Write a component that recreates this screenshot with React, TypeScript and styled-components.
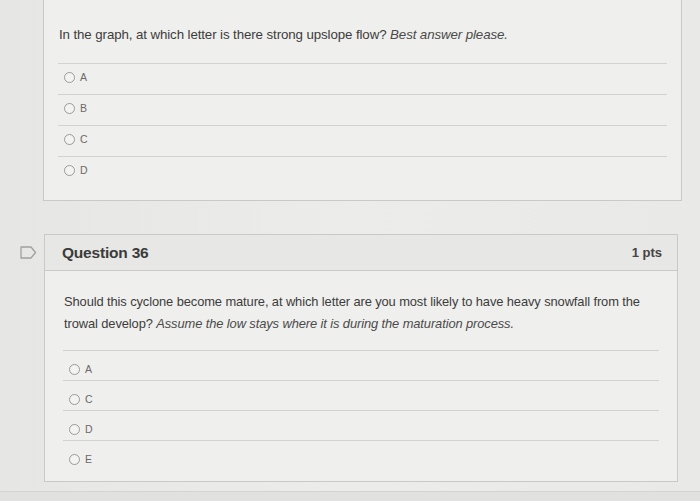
import React from "react";
import styled, { createGlobalStyle } from "styled-components";

const GlobalStyle = createGlobalStyle`
  html, body {
    margin: 0;
    padding: 0;
    background: #e8e8e6;
  }
  body {
    font-family: "Liberation Sans", Arial, sans-serif;
    color: #3a3a3a;
  }
`;

const Page = styled.div`
  width: 700px;
  height: 501px;
  overflow: hidden;
  display: flex;
  flex-direction: column;
  background: linear-gradient(90deg, #e6e6e4 0%, #ececea 50%, #e9e9e7 100%);
`;

const QuestionRow = styled.div<{ $top: number }>`
  display: flex;
  align-items: flex-start;
  margin-top: ${(p) => p.$top}px;
`;

const Gutter = styled.div<{ $width: number }>`
  width: ${(p) => p.$width}px;
  flex-shrink: 0;
  display: flex;
  padding-top: 12px;
  padding-left: 20px;
  box-sizing: border-box;
`;

const Card = styled.div<{ $width: number; $open?: boolean }>`
  width: ${(p) => p.$width}px;
  box-sizing: border-box;
  border: 1px solid #c9c9c7;
  border-top: ${(p) => (p.$open ? "none" : "1px solid #c9c9c7")};
  background: #efefed;
`;

const Header = styled.div`
  height: 35px;
  display: flex;
  align-items: center;
  justify-content: space-between;
  padding: 0 15px 0 17px;
  background: #e7e7e5;
  border-bottom: 1px solid #c9c9c7;
`;

const Title = styled.div`
  font-size: 15.5px;
  font-weight: bold;
  color: #3b3b3b;
  letter-spacing: -0.2px;
`;

const Points = styled.div`
  font-size: 13px;
  font-weight: bold;
  color: #444;
`;

const Body = styled.div<{ $pt: number; $pb: number; $px: number }>`
  padding: ${(p) => p.$pt}px ${(p) => p.$px}px ${(p) => p.$pb}px;
`;

const Prompt = styled.p<{ $size: number; $lh: number; $mb: number }>`
  margin: 0 0 ${(p) => p.$mb}px;
  padding: 0 0 0 1px;
  font-size: ${(p) => p.$size}px;
  line-height: ${(p) => p.$lh}px;
  color: #3c3c3c;
  letter-spacing: -0.1px;

  em {
    font-style: italic;
    color: #4a4a4a;
  }
`;

const Answers = styled.div`
  border-top: 1px solid #d2d2d0;
`;

const Answer = styled.label<{ $h: number; $pt: number; $last?: boolean }>`
  height: ${(p) => p.$h}px;
  box-sizing: border-box;
  display: flex;
  align-items: flex-start;
  gap: 5px;
  padding: ${(p) => p.$pt}px 0 0 6px;
  border-bottom: ${(p) => (p.$last ? "none" : "1px solid #d2d2d0")};
  font-size: 10.5px;
  line-height: 12px;
  color: #6a6a6a;
`;

const Radio = styled.span`
  width: 9px;
  height: 9px;
  margin-top: 1px;
  border-radius: 50%;
  border: 1px solid #9a9a9a;
  background: #f3f3f1;
  flex-shrink: 0;
`;

const Footer = styled.div`
  margin-top: auto;
  height: 9px;
  background: #e1e1e0;
  border-top: 1px solid #d4d4d2;
`;

const FlagIcon = () => (
  <svg width="17" height="13" viewBox="0 0 17 13" fill="none">
    <path
      d="M1 1 H11 L15.5 6.5 L11 12 H1 Z"
      stroke="#a0a0a0"
      strokeWidth="1.3"
      strokeLinejoin="round"
    />
  </svg>
);

const App = () => {
  return (
    <Page>
      <GlobalStyle />
      <QuestionRow $top={0}>
        <Gutter $width={43} />
        <Card $width={639} $open>
          <Body $pt={26} $pb={12} $px={14}>
            <Prompt $size={13.3} $lh={17} $mb={20}>
              In the graph, at which letter is there strong upslope flow?{" "}
              <em>Best answer please.</em>
            </Prompt>
            <Answers>
              {["A", "B", "C", "D"].map((l, i, arr) => (
                <Answer key={l} $h={31} $pt={7} $last={i === arr.length - 1}>
                  <Radio />
                  {l}
                </Answer>
              ))}
            </Answers>
          </Body>
        </Card>
      </QuestionRow>

      <QuestionRow $top={33}>
        <Gutter $width={44}>
          <FlagIcon />
        </Gutter>
        <Card $width={634}>
          <Header>
            <Title>Question 36</Title>
            <Points>1 pts</Points>
          </Header>
          <Body $pt={20} $pb={10} $px={18}>
            <Prompt $size={12.9} $lh={22} $mb={15}>
              Should this cyclone become mature, at which letter are you most
              likely to have heavy snowfall from the trowal develop?{" "}
              <em>Assume the low stays where it is during the maturation process.</em>
            </Prompt>
            <Answers>
              {["A", "C", "D", "E"].map((l, i, arr) => (
                <Answer key={l} $h={30} $pt={12} $last={i === arr.length - 1}>
                  <Radio />
                  {l}
                </Answer>
              ))}
            </Answers>
          </Body>
        </Card>
      </QuestionRow>
      <Footer />
    </Page>
  );
};

export default App;
